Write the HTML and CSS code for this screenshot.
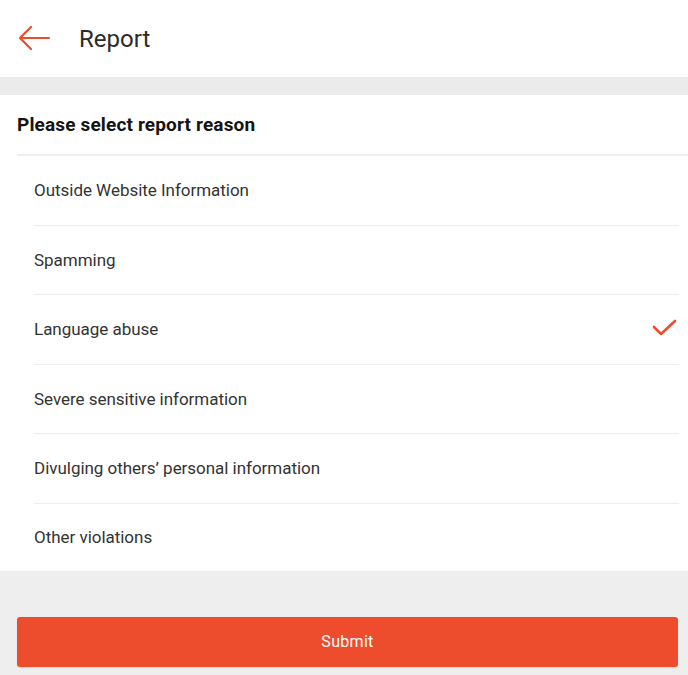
FILE: index.html
```html
<!DOCTYPE html>
<html>
<head>
<meta charset="utf-8">
<link rel="stylesheet" href="styles.css">
</head>
<body>
<div class="page">
  <header class="topbar">
    <svg class="back" width="34" height="28" viewBox="0 0 34 28">
      <path d="M32 14 H3 M14 3 L3 14 L14 25" fill="none" stroke="#ee4d2d" stroke-width="2.2" stroke-linecap="round" stroke-linejoin="round"/>
    </svg>
    <h1 class="title">Report</h1>
  </header>
  <div class="band"></div>
  <section class="card">
    <div class="card-head">Please select report reason</div>
    <ul class="reasons">
      <li class="reason">Outside Website Information</li>
      <li class="reason">Spamming</li>
      <li class="reason selected">Language abuse
        <svg class="check" width="28" height="20" viewBox="0 0 28 20">
          <path d="M3 8 L10 15 L24 2" fill="none" stroke="#ee4d2d" stroke-width="2.6" stroke-linecap="round" stroke-linejoin="round"/>
        </svg>
      </li>
      <li class="reason">Severe sensitive information</li>
      <li class="reason">Divulging others’ personal information</li>
      <li class="reason last">Other violations</li>
    </ul>
  </section>
  <div class="footer">
    <button class="submit">Submit</button>
  </div>
</div>
</body>
</html>
```

FILE: styles.css
```css
* { box-sizing: border-box; }
html, body {
  margin: 0;
  padding: 0;
  background: #ededed;
  font-family: Roboto, "Noto Sans", Arial, sans-serif;
}
.page {
  width: 688px;
  height: 675px;
  display: flex;
  flex-direction: column;
  overflow: hidden;
}
.topbar {
  height: 77px;
  background: #fff;
  display: flex;
  align-items: center;
  padding-left: 17px;
}
.back {
  display: block;
  margin-top: -2px;
}
.title {
  margin: 0 0 0 28px;
  font-size: 24px;
  font-weight: 400;
  color: #2b2b2b;
}
.band {
  height: 18px;
  background: #ebebeb;
}
.card {
  background: #fff;
}
.card-head {
  height: 61px;
  margin-left: 17px;
  display: flex;
  align-items: center;
  font-size: 19px;
  letter-spacing: 0.15px;
  font-weight: 700;
  color: #141414;
  border-bottom: 2px solid #efefef;
}
.reasons {
  list-style: none;
  margin: 0;
  padding: 0 9px 0 34px;
}
.reason {
  height: 69.5px;
  display: flex;
  align-items: center;
  justify-content: space-between;
  font-size: 17px;
  letter-spacing: -0.03px;
  color: #333;
  border-bottom: 1.5px solid #efefef;
}
.reason.last {
  border-bottom: none;
  height: 67px;
}
.check {
  display: block;
}
.footer {
  flex: 1;
  background: #eeeeee;
  padding: 46px 10px 0 17px;
}
.submit {
  width: 661px;
  height: 50px;
  border: none;
  border-radius: 3px;
  background: #ee4d2d;
  color: #fff;
  font-family: Roboto, "Noto Sans", Arial, sans-serif;
  font-size: 16px;
  letter-spacing: 0.3px;
  box-shadow: 0 1px 2px rgba(0,0,0,0.08);
}
```
